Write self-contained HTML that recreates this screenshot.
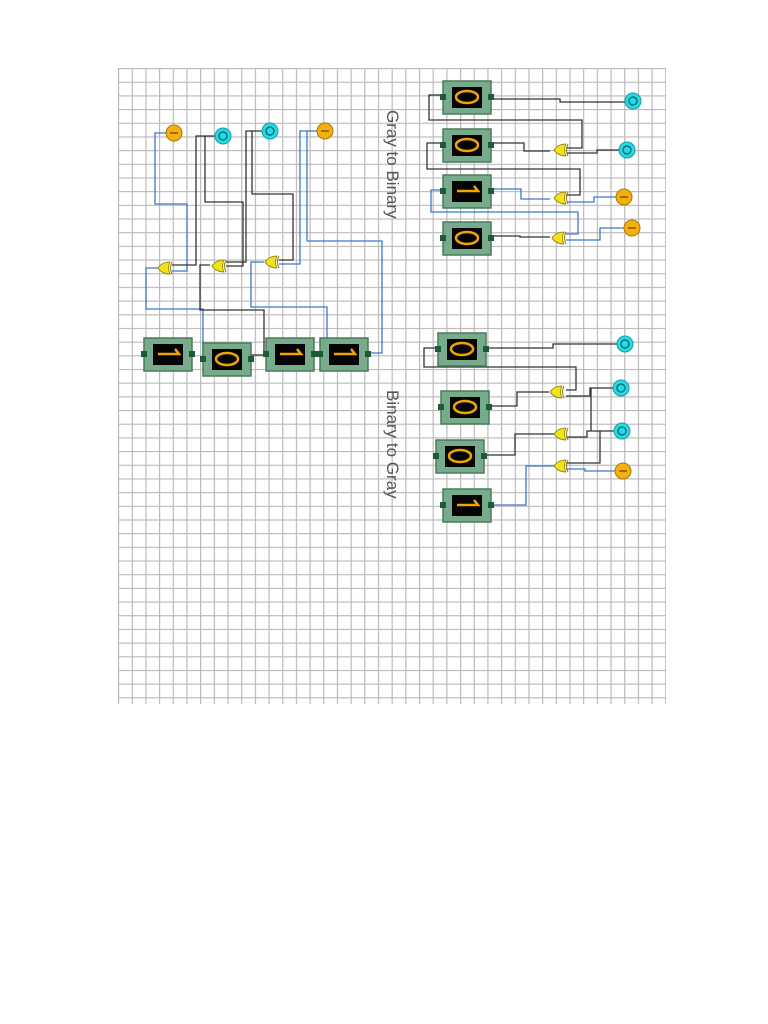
<!DOCTYPE html>
<html><head><meta charset="utf-8"><style>
html,body{margin:0;padding:0;background:#fff;width:768px;height:1024px;overflow:hidden}
svg{position:absolute;left:0;top:0}
text{font-family:"Liberation Sans",sans-serif}
</style></head><body>
<svg width="768" height="1024" viewBox="0 0 768 1024">
<defs>
<pattern id="g" x="118" y="68" width="13.68" height="13.68" patternUnits="userSpaceOnUse">
<path d="M0.5 0V13.68M0 0.5H13.68" stroke="#b8b8b8" stroke-width="1.3" fill="none"/>
</pattern>
<g id="gate"><path d="M-7 0Q-3 -6 5 -6Q2 0 5 6Q-3 6 -7 0Z" fill="#f2e21a" stroke="#8a7d10" stroke-width="0.8"/><path d="M7 -6Q4 0 7 6" fill="none" stroke="#8a7d10" stroke-width="1"/></g>
<g id="box"><rect x="0" y="0" width="48" height="33" fill="#78aa8c" stroke="#4a7a5c" stroke-width="1.5"/><rect x="9" y="6" width="30" height="21" fill="#050505"/><rect x="-3" y="13" width="6" height="6" fill="#1e5a33"/><rect x="45" y="13" width="6" height="6" fill="#1e5a33"/></g>
<g id="cy"><circle r="8" fill="#22dde8" stroke="#199aa5"/><circle r="4" fill="none" stroke="#0c6f7a" stroke-width="1.5"/></g>
<g id="or"><circle r="8" fill="#f5b00e" stroke="#a87a05"/><path d="M-4 0H4" stroke="#6a4a00" stroke-width="1.3"/></g>
</defs>
<rect x="118" y="68" width="548" height="636" fill="url(#g)"/>

<g fill="none" stroke-width="1.3">
<path stroke="#333" d="M490 99H560V102H625"/>
<path stroke="#333" d="M443 95H429V120H582V148H566"/>
<path stroke="#333" d="M490 143H524V151H550"/>
<path stroke="#333" d="M567 153H597V150H620"/>
<path stroke="#333" d="M443 143H427V169H580V195H566"/>
<path stroke="#3a78d0" d="M490 189H521V199H550"/>
<path stroke="#3a78d0" d="M567 202H594V197H617"/>
<path stroke="#3a78d0" d="M443 190H431V212H578V234H566"/>
<path stroke="#333" d="M490 236H520V237H550"/>
<path stroke="#3a78d0" d="M624 228H600V240H566"/>
<path stroke="#333" d="M486 348H553V344H617"/>
<path stroke="#333" d="M438 348H424V367H576V390H566"/>
<path stroke="#333" d="M489 406H517V392H549"/>
<path stroke="#333" d="M566 396H590V388H613"/>
<path stroke="#333" d="M484 455H515V434H555"/>
<path stroke="#333" d="M567 437H587V431H614M591 388V431"/>
<path stroke="#333" d="M600 431V463H566"/>
<path stroke="#3a78d0" d="M491 505H526V466H555"/>
<path stroke="#3a78d0" d="M615 471H585V469H566"/>
<path stroke="#3a78d0" d="M166 133H155V204H187V271H172"/>
<path stroke="#333" d="M215 136H196V265H172"/>
<path stroke="#333" d="M205 136V202H243V266H226"/>
<path stroke="#333" d="M262 131H246V262H226"/>
<path stroke="#333" d="M252 131V194H293V260H279"/>
<path stroke="#3a78d0" d="M317 131H300V264H279"/>
<path stroke="#3a78d0" d="M307 131V241H382V353H368"/>
<path stroke="#3a78d0" d="M158 268H146V309H203V355"/>
<path stroke="#333" d="M210 265H200V310H264V355H251"/>
<path stroke="#3a78d0" d="M264 262H251V307H327V353H320"/>
</g>

<use href="#box" x="443" y="81"/><use href="#box" x="443" y="129"/><use href="#box" x="443" y="175"/><use href="#box" x="443" y="222"/>
<use href="#box" x="438" y="333"/><use href="#box" x="441" y="391"/><use href="#box" x="436" y="440"/><use href="#box" x="443" y="489"/>
<use href="#box" x="144" y="338"/><use href="#box" x="203" y="343"/><use href="#box" x="266" y="338"/><use href="#box" x="320" y="338"/>
<g fill="none" stroke="#f2a400" stroke-width="2.5">
<ellipse cx="467" cy="97" rx="11" ry="6"/><ellipse cx="467" cy="145" rx="11" ry="6"/><ellipse cx="467" cy="238" rx="11" ry="6"/>
<ellipse cx="462" cy="349" rx="11" ry="6"/><ellipse cx="465" cy="407" rx="11" ry="6"/><ellipse cx="460" cy="456" rx="11" ry="6"/>
<ellipse cx="227" cy="359" rx="11" ry="6"/>
<path d="M457 191H478L474 186"/><path d="M457 505H478L474 500"/>
<path d="M158 354H179L175 349"/><path d="M280 354H301L297 349"/><path d="M334 354H355L351 349"/>
</g>

<use href="#gate" x="561" y="150"/><use href="#gate" x="561" y="198"/><use href="#gate" x="559" y="238"/>
<use href="#gate" x="557" y="392"/><use href="#gate" x="561" y="434"/><use href="#gate" x="561" y="466"/>
<use href="#gate" x="165" y="268"/><use href="#gate" x="219" y="266"/><use href="#gate" x="272" y="262"/>

<use href="#cy" x="633" y="101"/><use href="#cy" x="627" y="150"/>
<use href="#or" x="624" y="197"/><use href="#or" x="632" y="228"/>
<use href="#cy" x="625" y="344"/><use href="#cy" x="621" y="388"/><use href="#cy" x="622" y="431"/>
<use href="#or" x="623" y="471"/>
<use href="#or" x="174" y="133"/><use href="#cy" x="223" y="136"/><use href="#cy" x="270" y="131"/><use href="#or" x="325" y="131"/>

<text transform="translate(387,110) rotate(90)" font-size="17" fill="#555">Gray to Binary</text>
<text transform="translate(387,390) rotate(90)" font-size="17" fill="#555">Binary to Gray</text>
</svg>
</body></html>
